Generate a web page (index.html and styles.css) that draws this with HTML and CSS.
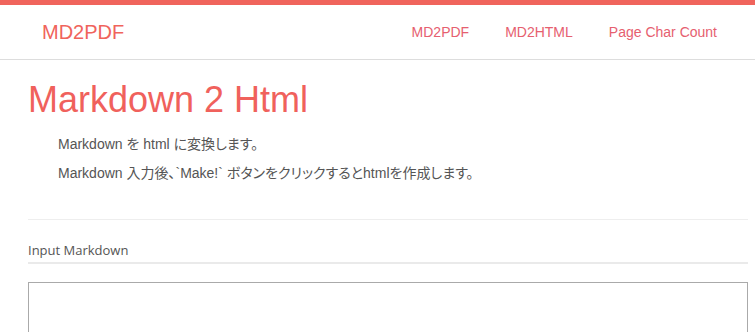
FILE: index.html
```html
<!DOCTYPE html>
<html lang="ja">
  <head>
    <meta charset="UTF-8" />
    <meta name="viewport" content="width=device-width, initial-scale=1.0" />
    <title>Markdown 2 Html</title>
    <link rel="stylesheet" href="styles.css">
  </head>
  <body>
    <header class="main-header">
      <nav class="main-header__nav">
        <a class="main-header__brand" href="#">MD2PDF</a>
        <ul class="main-header__item_list">
          <li class="main-header__item"><a href="#">MD2PDF</a></li>
          <li class="main-header__item"><a href="#">MD2HTML</a></li>
          <li class="main-header__item"><a href="#">Page Char Count</a></li>
        </ul>
      </nav>
    </header>

    <div class="container">
      <h1>Markdown 2 Html</h1>
      <div class="description">
        <p>Markdown を html に変換します。</p>
        <p>Markdown 入力後、`Make!` ボタンをクリックするとhtmlを作成します。</p>
      </div>
      <hr />
      <div class="input-title">Input Markdown</div>
      <textarea class="input-area"></textarea>
    </div>
  </body>
</html>
```

FILE: styles.css
```css
body {
  font-family: "Liberation Sans", Arial, "Noto Sans CJK JP", sans-serif;
  margin: 0;
  padding: 0;
  background-color: #fff;
  color: #555;
}

.main-header {
  border-top: 5px solid #f0645c;
  border-bottom: 1px solid #ddd;
  height: 54px;
}

.main-header__nav {
  display: flex;
  align-items: center;
  justify-content: space-between;
  height: 100%;
  padding: 0 38px 0 42px;
}

.main-header__brand {
  font-size: 20px;
  color: #f0645c;
  text-decoration: none;
}

.main-header__item_list {
  list-style: none;
  margin: 0;
  padding: 0;
  display: flex;
  gap: 36px;
}

.main-header__item a {
  font-size: 14px;
  color: #e6606f;
  text-decoration: none;
}

.container {
  width: 720px;
  margin-left: 28px;
}

h1 {
  font-size: 36px;
  font-weight: normal;
  color: #f0615c;
  margin: 19px 0 0;
  line-height: 42px;
}

.description {
  padding-left: 30px;
  margin-top: 14px;
}

.description p {
  font-size: 14px;
  margin: 0 0 10px;
  line-height: 19px;
  font-feature-settings: "palt";
}

hr {
  border: none;
  border-top: 1px solid #eee;
  margin: 36px 0 0;
}

.input-title {
  font-family: "Open Sans", sans-serif;
  font-size: 13px;
  color: #555;
  margin-top: 21px;
  padding-bottom: 3px;
  border-bottom: 2px solid #eaeaea;
}

.input-area {
  display: block;
  width: 720px;
  height: 120px;
  margin-top: 18px;
  border: 1px solid #aaa;
  box-sizing: border-box;
  resize: none;
}
```
